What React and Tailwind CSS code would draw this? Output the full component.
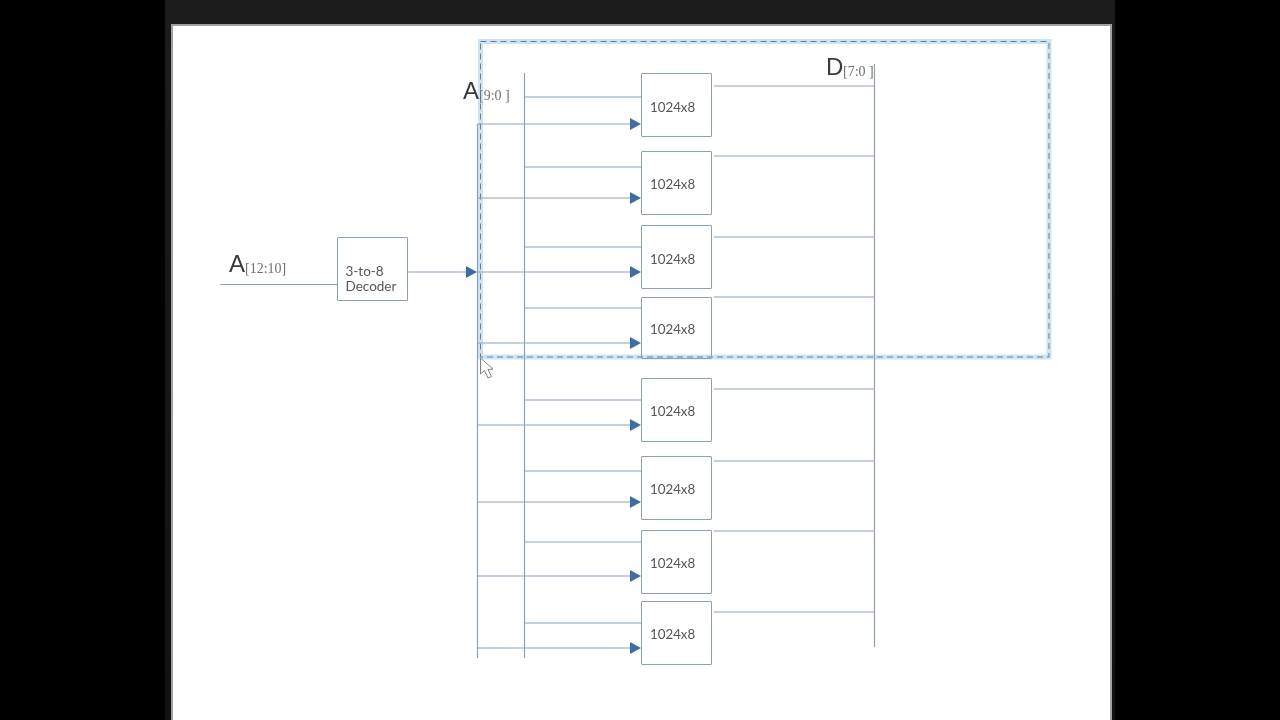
const rows = [
  { top: 73, h: 63, text: 107, wire: 97, arrow: 124, out: 86 },
  { top: 151, h: 63, text: 184, wire: 167, arrow: 198, out: 156 },
  { top: 225, h: 63, text: 259, wire: 247, arrow: 272, out: 237 },
  { top: 297, h: 61, text: 329, wire: 308, arrow: 343, out: 297 },
  { top: 378, h: 63, text: 411, wire: 400, arrow: 425, out: 389 },
  { top: 456, h: 63, text: 489, wire: 471, arrow: 502, out: 461 },
  { top: 530, h: 63, text: 563, wire: 542, arrow: 576, out: 531 },
  { top: 601, h: 63, text: 634, wire: 623, arrow: 648, out: 612 },
];

const WIRE = "#8aa1bd";
const ARROW = "#3d6da6";

function Label({ x, y, main, sub, subX }) {
  return (
    <>
      <span className="absolute text-[24px] leading-[28px] text-[#3a3a3a] blur-[0.2px] font-['Liberation_Sans',sans-serif]" style={{ left: x, top: y }}>
        {main}
      </span>
      <span className="absolute text-[14px] leading-[16px] text-[#707070] blur-[0.2px] whitespace-pre font-['Liberation_Serif',serif]" style={{ left: subX, top: y + 11 }}>
        {sub}
      </span>
    </>
  );
}

export default function App() {
  return (
    <div className="relative w-[1280px] h-[720px] overflow-hidden bg-black font-['Lato',sans-serif]">
      <div className="mx-auto w-[950px] h-full bg-gradient-to-b from-[#1c1c1c] to-[#111111] pt-[24px] pl-[6px] pr-[3px]">
        <div className="h-full bg-white border-l-2 border-t-2 border-r-2 border-[#a0a0a0]" />
      </div>

      <svg className="absolute inset-0 blur-[0.3px]" width="1280" height="720" viewBox="0 0 1280 720" fill="none">
        <rect x="480.500" y="41.500" width="568.500" height="315.500" stroke="#cfe4f2" strokeWidth="5" />
        <rect x="480.500" y="41.500" width="568.500" height="315.500" stroke="#6b7f8f" strokeWidth="1" strokeDasharray="6 4" />
        <g stroke={WIRE} strokeWidth="1.2">
          <path d="M220 284.500H337" />
          <path d="M408 272H470" />
          <path d="M477.500 124V658" />
          <path d="M524.500 73V658" />
          <path d="M874.500 64V647" />
          {rows.map((r) => (
            <g key={r.top}>
              <path d={`M524.500 ${r.wire}H641`} />
              <path d={`M477.500 ${r.arrow}H632`} />
              <path d={`M714 ${r.out}H874.500`} />
            </g>
          ))}
        </g>
        <g fill={ARROW}>
          <path d="M466 266L477 272L466 278Z" />
          {rows.map((r) => (
            <path key={r.top} d={`M630 ${r.arrow - 6}L641 ${r.arrow}L630 ${r.arrow + 6}Z`} />
          ))}
        </g>
        <path d="M480.500 358V374L484.500 370.500L488 378L491.500 376.500L488 369.500L493 369Z" fill="#ffffff" stroke="#808080" strokeWidth="1" />
      </svg>

      {rows.map((r) => (
        <div
          key={r.top}
          className="absolute left-[641px] w-[71px] border-[1.5px] border-[#8ba0bc] rounded-[1px] pl-[8px] text-[13.300px] leading-[16px] text-[#555555] blur-[0.2px]"
          style={{ top: r.top, height: r.h + 1, paddingTop: r.text - r.top - 9.5 }}
        >
          1024x8
        </div>
      ))}

      <div className="absolute left-[337px] top-[237px] w-[71px] h-[64px] border-[1.5px] border-[#8ba0bc] rounded-[1px] bg-white pl-[7.500px] pt-[26px] text-[13.500px] leading-[15px] text-[#555555] blur-[0.2px]">
        <div>3-to-8</div>
        <div>Decoder</div>
      </div>

      <Label x={229} y={250} main="A" sub="[12:10]" subX={245} />
      <Label x={463} y={77} main="A" sub="[9:0 ]" subX={479} />
      <Label x={826} y={53} main="D" sub="[7:0 ]" subX={843} />
    </div>
  );
}
